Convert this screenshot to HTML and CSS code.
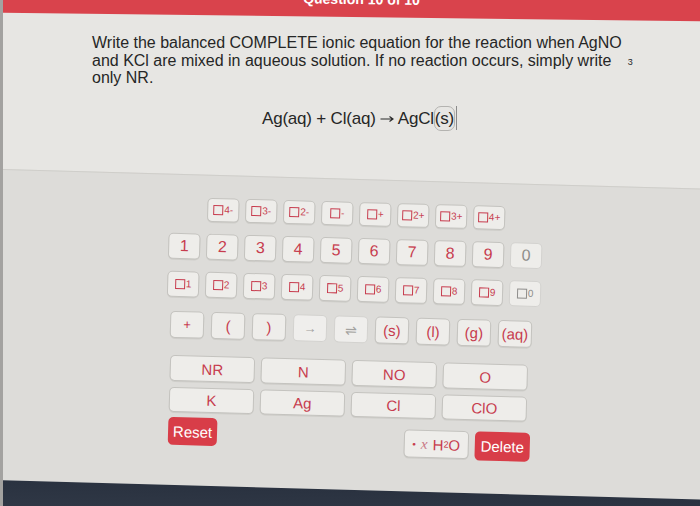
FILE: index.html
```html
<!DOCTYPE html>
<html>
<head>
<meta charset="utf-8">
<title>Question 10 of 10</title>
<link rel="stylesheet" href="styles.css">
</head>
<body>
<div class="screen">
  <div class="topbar"><span class="qnum">Question 10 of 10</span></div>
  <div class="question">
    <p class="prompt">Write the balanced COMPLETE ionic equation for the reaction when AgNO<sub class="psub">3</sub><br>and KCl are mixed in aqueous solution. If no reaction occurs, simply write<br>only NR.</p>
    <div class="equation">Ag(aq) + Cl(aq) <svg class="arrow" width="14" height="8" viewBox="0 0 14 8"><path d="M0.5 4H12.5M9.5 1.5L13 4L9.5 6.5" fill="none" stroke="#2a2a2a" stroke-width="1.2"/></svg> AgCl<span class="cursorbox">(s)</span><span class="caret"></span></div>
  </div>
  <div class="lower">
    <div class="pad">
      <div class="keys">
        <div class="row r1">
          <div class="key small"><span class="sq"></span><sup>4-</sup></div>
          <div class="key small"><span class="sq"></span><sup>3-</sup></div>
          <div class="key small"><span class="sq"></span><sup>2-</sup></div>
          <div class="key small"><span class="sq"></span><sup>-</sup></div>
          <div class="key small"><span class="sq"></span><sup>+</sup></div>
          <div class="key small"><span class="sq"></span><sup>2+</sup></div>
          <div class="key small"><span class="sq"></span><sup>3+</sup></div>
          <div class="key small"><span class="sq"></span><sup>4+</sup></div>
        </div>
        <div class="row r2">
          <div class="key">1</div>
          <div class="key">2</div>
          <div class="key">3</div>
          <div class="key">4</div>
          <div class="key">5</div>
          <div class="key">6</div>
          <div class="key">7</div>
          <div class="key">8</div>
          <div class="key">9</div>
          <div class="key off">0</div>
        </div>
        <div class="row r3">
          <div class="key small"><span class="sq"></span><sub>1</sub></div>
          <div class="key small"><span class="sq"></span><sub>2</sub></div>
          <div class="key small"><span class="sq"></span><sub>3</sub></div>
          <div class="key small"><span class="sq"></span><sub>4</sub></div>
          <div class="key small"><span class="sq"></span><sub>5</sub></div>
          <div class="key small"><span class="sq"></span><sub>6</sub></div>
          <div class="key small"><span class="sq"></span><sub>7</sub></div>
          <div class="key small"><span class="sq"></span><sub>8</sub></div>
          <div class="key small"><span class="sq"></span><sub>9</sub></div>
          <div class="key small off"><span class="sq"></span><sub>0</sub></div>
        </div>
        <div class="row r4">
          <div class="key plus">+</div>
          <div class="key">(</div>
          <div class="key">)</div>
          <div class="key off faint">→</div>
          <div class="key off faint eq">⇌</div>
          <div class="key">(s)</div>
          <div class="key">(l)</div>
          <div class="key">(g)</div>
          <div class="key">(aq)</div>
        </div>
        <div class="row r5">
          <div class="key wide">NR</div>
          <div class="key wide">N</div>
          <div class="key wide">NO</div>
          <div class="key wide">O</div>
        </div>
        <div class="row r6">
          <div class="key wide">K</div>
          <div class="key wide">Ag</div>
          <div class="key wide">Cl</div>
          <div class="key wide">ClO</div>
        </div>
        <div class="row r7">
          <div class="btn reset">Reset</div>
          <div class="key water"><span class="dot">•</span><span class="mx">x</span>H<sub>2</sub>O</div>
          <div class="btn delete">Delete</div>
        </div>
      </div>
    </div>
    <div class="bottom"></div>
  </div>
</div>
</body>
</html>
```

FILE: styles.css
```css
html, body {
  margin: 0;
  padding: 0;
  background: #e6e5e2;
}
.screen {
  width: 700px;
  height: 506px;
  overflow: hidden;
  box-sizing: border-box;
  border-left: 3px solid #a3a2a0;
  background: #e7e6e3;
  font-family: "Liberation Sans", Arial, sans-serif;
}
.topbar {
  margin: -10px -30px 0 -30px;
  height: 27px;
  background: #d9434c;
  transform: rotate(0.7deg);
  text-align: center;
  overflow: hidden;
}
.qnum {
  display: inline-block;
  margin-top: 0;
  margin-left: 20px;
  color: #fff;
  font-weight: bold;
  font-size: 14px;
  line-height: 12px;
}
.question {
  padding-bottom: 48px;
}
.prompt {
  margin: 17px 0 0 89px;
  font-size: 16px;
  line-height: 17.5px;
  color: #262626;
}
.psub {
  font-size: 9px;
  line-height: 0;
  vertical-align: baseline;
  position: relative;
  top: 17px;
  margin-left: 6px;
}
.equation {
  margin: 19px 0 0 259px;
  font-size: 17px;
  line-height: 24px;
  letter-spacing: -0.2px;
  color: #262626;
  white-space: nowrap;
}
.arrow {
  vertical-align: 1px;
}
.cursorbox {
  border: 1px solid #b4b3b0;
  border-radius: 7px;
  padding: 2px 0;
}
.caret {
  display: inline-block;
  width: 1px;
  height: 24px;
  background: #8a8a8a;
  vertical-align: -6px;
  margin-left: 1px;
}
.lower {
  width: 790px;
  margin-left: -45px;
  transform: rotate(1.6deg);
  transform-origin: 400px 150px;
}
.pad {
  height: 311px;
  background: #dddcd9;
  border-top: 1px solid #cfceca;
  box-sizing: border-box;
}
.bottom {
  height: 80px;
  background: linear-gradient(#2a3240, #3a4351);
}
.keys {
  padding-top: 22px;
  margin-left: 208px;
  width: 380px;
}
.row {
  display: flex;
  align-items: flex-start;
}
.key {
  box-sizing: border-box;
  display: flex;
  align-items: center;
  justify-content: center;
  border: 1.5px solid #c4c3bf;
  border-radius: 5px;
  background: #eeedea;
  color: #c73c4e;
  font-size: 16px;
  box-shadow: 0 1px 0 #cfceca;
}
.r1 { margin-left: 38px; gap: 6px; }
.r1 .key { width: 32px; height: 24px; }
.r2 { margin-top: 12px; gap: 6px; }
.r2 .key { width: 32px; height: 26px; }
.r3 { margin-top: 12px; gap: 6px; }
.r3 .key { width: 32px; height: 26px; }
.r4 { margin-top: 14px; margin-left: 4px; gap: 7px; }
.r4 .key { width: 34px; height: 27px; font-size: 15px; }
.r5 { margin-top: 17px; margin-left: 5px; gap: 6px; }
.r6 { margin-top: 6px; margin-left: 5px; gap: 6px; }
.wide { width: 85px; height: 26px; font-size: 15px; }
.r6 .wide { height: 25px; }
.key.off {
  color: #8e8d8b;
  border-color: #d3d2cf;
  box-shadow: none;
}
.key.faint {
  color: #a3a2a0;
  background: #efeeec;
  font-size: 13px;
}
.key.eq { font-size: 14px; }
.key.plus { font-size: 13px; }
.small sup, .small sub {
  font-size: 10px;
  line-height: 0;
  margin-left: 1px;
}
.small sup { vertical-align: 5px; }
.small sub { vertical-align: -4px; }
.sq {
  display: inline-block;
  width: 8px;
  height: 8px;
  border: 1px solid currentColor;
}
.r7 { margin-top: 5px; margin-left: 5px; }
.btn {
  box-sizing: border-box;
  display: flex;
  align-items: center;
  justify-content: center;
  border-radius: 5px;
  background: #d83d48;
  color: #fff;
  font-size: 15px;
}
.reset { width: 49px; height: 28px; }
.water {
  margin-top: 6px;
  margin-left: 187px;
  width: 65px;
  height: 28px;
  font-size: 15px;
}
.water sub {
  font-size: 9px;
  line-height: 0;
  vertical-align: -7px;
}
.dot { font-size: 10px; margin-right: 5px; }
.mx {
  font-family: "Liberation Serif", serif;
  font-style: italic;
  font-size: 15px;
  margin-right: 5px;
  color: #c97a86;
}
.delete {
  margin-top: 6px;
  margin-left: 6px;
  width: 55px;
  height: 29px;
}
```
